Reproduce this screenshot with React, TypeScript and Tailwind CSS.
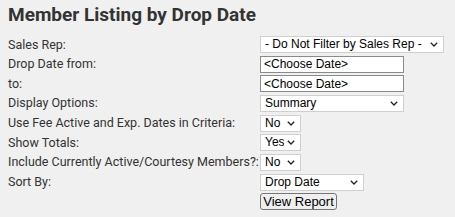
import React from "react";

const ctrlFont = "font-['Liberation_Sans',Arial,sans-serif] text-[12px] text-black";

function Chevron() {
  return (
    <svg
      width="8"
      height="5"
      viewBox="0 0 8 5"
      className="pointer-events-none absolute right-[6px] top-[6px]"
    >
      <polyline points="0.8,0.8 4,4 7.2,0.8" fill="none" stroke="#222" strokeWidth="1.3" />
    </svg>
  );
}

function Sel({ w, value, options }: { w: string; value: string; options: string[] }) {
  return (
    <div className={`relative ${w} h-[17px]`}>
      <select
        defaultValue={value}
        className={`${ctrlFont} block h-full w-full appearance-none border border-[#cfcfcf] bg-white pl-[4px] pr-[16px] leading-[15px] outline-none`}
      >
        {options.map((o) => (
          <option key={o} value={o}>
            {o}
          </option>
        ))}
      </select>
      <Chevron />
    </div>
  );
}

function DateInput() {
  return (
    <input
      type="text"
      defaultValue="<Choose Date>"
      className={`${ctrlFont} block h-[17px] w-[144px] border border-[#8a8a8a] bg-white px-[3px] leading-[15px] outline-none`}
    />
  );
}

function Row({ label, children }: { label: string; children: React.ReactNode }) {
  return (
    <div className="flex items-start">
      <div className="w-[252px] shrink-0 whitespace-nowrap text-[12.5px] leading-[15px] mt-[0.5px]">{label}</div>
      <div>{children}</div>
    </div>
  );
}

export default function App() {
  return (
    <div className="min-h-screen bg-[#f0f0f0] pl-2 pt-1 font-['Roboto',sans-serif] text-[#333]">
      <h1 className="text-[19px] font-bold leading-[22px]">Member Listing by Drop Date</h1>
      <div className="mt-[10px] grid auto-rows-[19.66px]">
        <Row label="Sales Rep:">
          <Sel w="w-[184px]" value="- Do Not Filter by Sales Rep -" options={["- Do Not Filter by Sales Rep -"]} />
        </Row>
        <Row label="Drop Date from:">
          <DateInput />
        </Row>
        <Row label="to:">
          <DateInput />
        </Row>
        <Row label="Display Options:">
          <Sel w="w-[144px]" value="Summary" options={["Summary", "Detail"]} />
        </Row>
        <Row label="Use Fee Active and Exp. Dates in Criteria:">
          <Sel w="w-[41px]" value="No" options={["No", "Yes"]} />
        </Row>
        <Row label="Show Totals:">
          <Sel w="w-[41px]" value="Yes" options={["Yes", "No"]} />
        </Row>
        <Row label="Include Currently Active/Courtesy Members?:">
          <Sel w="w-[41px]" value="No" options={["No", "Yes"]} />
        </Row>
        <Row label="Sort By:">
          <Sel w="w-[104px]" value="Drop Date" options={["Drop Date", "Name"]} />
        </Row>
        <Row label="">
          <button
            type="button"
            className="block h-[17px] w-[77px] rounded-[3px] border border-[#767676] bg-[#efefef] p-0 font-['Liberation_Sans',Arial,sans-serif] text-[13px] leading-[15px] text-black"
          >
            View Report
          </button>
        </Row>
      </div>
    </div>
  );
}
